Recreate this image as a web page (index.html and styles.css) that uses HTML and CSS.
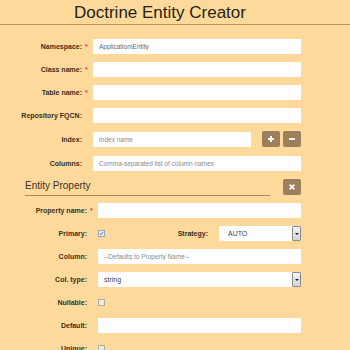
FILE: index.html
```html
<!DOCTYPE html>
<html lang="en">
<head>
    <meta charset="UTF-8">
    <title>Doctrine Entity Creator</title>
    <link rel="stylesheet" href="styles.css">
</head>
<body>
    <div class="header">
        <h1>Doctrine Entity Creator</h1>
    </div>

    <form class="entity-form">
        <div class="row">
            <label>Namespace:</label><span class="star">*</span>
            <input type="text" value="Application\Entity">
        </div>
        <div class="row">
            <label>Class name:</label><span class="star">*</span>
            <input type="text">
        </div>
        <div class="row">
            <label>Table name:</label><span class="star">*</span>
            <input type="text">
        </div>
        <div class="row">
            <label>Repository FQCN:</label><span class="star"></span>
            <input type="text">
        </div>
        <div class="row tall">
            <label>Index:</label><span class="star"></span>
            <div class="index-field">
                <input type="text" placeholder="Index name">
                <button type="button" class="icon-btn">
                    <svg width="6" height="6" viewBox="0 0 8 8"><path d="M2.8 0h2.4v2.8H8v2.4H5.2V8H2.8V5.2H0V2.8h2.8z" fill="#fff"/></svg>
                </button>
                <button type="button" class="icon-btn">
                    <svg width="6" height="6" viewBox="0 0 8 8"><path d="M0 2.8h8v2.4H0z" fill="#fff"/></svg>
                </button>
            </div>
        </div>
        <div class="row tall">
            <label>Columns:</label><span class="star"></span>
            <input type="text" placeholder="Comma-separated list of column names">
        </div>

        <div class="section-head">
            <h2>Entity Property</h2>
            <button type="button" class="icon-btn">
                <svg width="6" height="6" viewBox="0 0 8 8"><path d="M1.6 0L4 2.4 6.4 0 8 1.6 5.6 4 8 6.4 6.4 8 4 5.6 1.6 8 0 6.4 2.4 4 0 1.6z" fill="#fff"/></svg>
            </button>
        </div>

        <div class="property">
            <div class="row">
                <label>Property name:</label><span class="star">*</span>
                <input type="text">
            </div>
            <div class="row">
                <label>Primary:</label><span class="star"></span>
                <div class="primary-field">
                    <span class="check checked">
                        <svg width="7" height="7" viewBox="0 0 7 7"><path d="M1.2 3.6l1.4 1.5 3-3.6" stroke="#2a4f9a" stroke-width="1.1" fill="none"/></svg>
                    </span>
                    <label class="inline">Strategy:</label>
                    <div class="select small">
                        <span>AUTO</span>
                        <span class="arrow"></span>
                    </div>
                </div>
            </div>
            <div class="row">
                <label>Column:</label><span class="star"></span>
                <input type="text" placeholder="--Defaults to Property Name--">
            </div>
            <div class="row">
                <label>Col. type:</label><span class="star"></span>
                <div class="select">
                    <span>string</span>
                    <span class="arrow"></span>
                </div>
            </div>
            <div class="row">
                <label>Nullable:</label><span class="star"></span>
                <div><span class="check"></span></div>
            </div>
            <div class="row">
                <label>Default:</label><span class="star"></span>
                <input type="text">
            </div>
            <div class="row">
                <label>Unique:</label><span class="star"></span>
                <div><span class="check"></span></div>
            </div>
        </div>
    </form>
</body>
</html>
```

FILE: styles.css
```css
body {
    margin: 0;
    background-color: #fed99c;
    font-family: "Liberation Sans", Arial, sans-serif;
    color: #3a301c;
    overflow: hidden;
}

.header {
    height: 24px;
    border-bottom: 1px solid #b8935c;
}

h1 {
    margin: 0;
    padding-left: 74px;
    font-size: 17px;
    font-weight: normal;
    line-height: 26px;
    color: #241f10;
}

.entity-form {
    padding-top: 10px;
}

.row {
    display: grid;
    grid-template-columns: 82px 11px 208px;
    align-items: center;
    height: 23px;
}

.row.tall {
    height: 24px;
}

.row label {
    text-align: right;
    font-size: 7px;
    font-weight: bold;
    white-space: nowrap;
}

.star {
    padding-left: 3px;
    font-size: 7px;
    font-weight: bold;
    color: #e2442a;
}

input[type="text"] {
    box-sizing: border-box;
    height: 15px;
    width: 100%;
    margin: 0;
    padding: 0 6px;
    border: 0;
    background: #fff;
    font-family: "Liberation Sans", Arial, sans-serif;
    font-size: 6.5px;
    color: #666;
}

input::placeholder {
    color: #8a8a8a;
}

.index-field {
    display: flex;
    align-items: center;
}

.index-field input[type="text"] {
    width: 158px;
    margin-right: 11px;
}

.index-field .icon-btn + .icon-btn {
    margin-left: 3px;
}

.icon-btn {
    width: 18px;
    height: 16px;
    padding: 0;
    border: 0;
    border-radius: 2px;
    background-color: #9d7f5b;
    display: flex;
    align-items: center;
    justify-content: center;
}

.section-head {
    display: flex;
    align-items: center;
    height: 24px;
    padding-left: 25px;
}

h2 {
    box-sizing: border-box;
    width: 245px;
    height: 17px;
    margin: 0 13px 0 0;
    border-bottom: 1px solid #a88a60;
    font-size: 10px;
    font-weight: normal;
    line-height: 13px;
    color: #3a301c;
}

.property {
    padding-left: 5px;
}

.property .row {
    grid-template-columns: 82px 11px 203px;
}

.check {
    box-sizing: border-box;
    display: block;
    width: 7px;
    height: 7px;
    border: 1px solid #b0aca4;
    background: #eeeae2;
}

.check.checked {
    display: flex;
    align-items: center;
    justify-content: center;
    background: #e6ecf5;
    border-color: #9aa6bc;
}

.primary-field {
    display: flex;
    align-items: center;
}

.primary-field .inline {
    flex: 1;
    padding-right: 11px;
}

.select {
    box-sizing: border-box;
    display: flex;
    align-items: center;
    height: 15px;
    background: #fff;
    font-size: 7px;
    color: #444;
}

.select.small {
    width: 82px;
}

.select span:first-child {
    flex: 1;
    padding-left: 6px;
}

.select.small span:first-child {
    padding-left: 9px;
}

.arrow {
    box-sizing: border-box;
    position: relative;
    width: 9px;
    height: 15px;
    border: 1px solid #8c8c8c;
    border-radius: 1px;
    background: linear-gradient(#f4f4f4, #d4d4d4);
}

.arrow::after {
    content: "";
    position: absolute;
    left: 2px;
    top: 6px;
    border-left: 2px solid transparent;
    border-right: 2px solid transparent;
    border-top: 2px solid #222;
}
```
